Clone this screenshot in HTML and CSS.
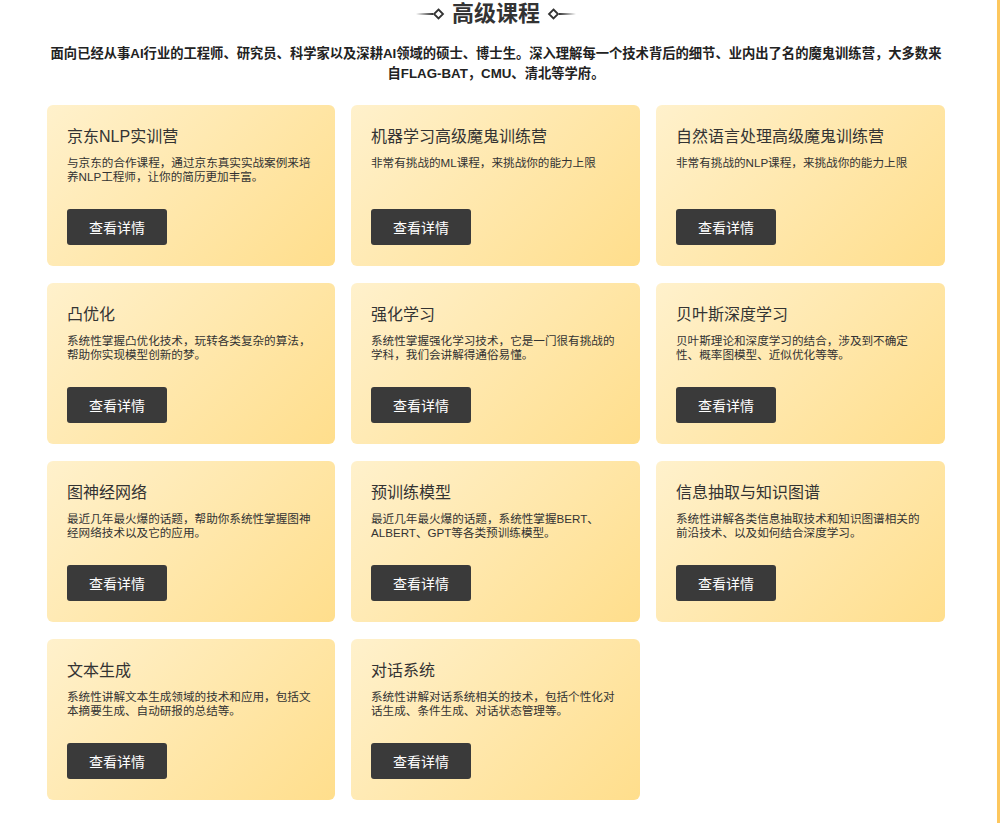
FILE: index.html
```html
<!DOCTYPE html>
<html lang="zh-CN">
<head>
  <meta charset="UTF-8" />
  <meta name="viewport" content="width=device-width, initial-scale=1" />
  <title>高级课程</title>
  <link rel="stylesheet" href="styles.css">
</head>
<body>
  <div class="page">
    <section class="courses">
      <h2 class="section-title">
        <svg class="deco" width="30" height="12" viewBox="0 0 30 12">
          <defs>
            <linearGradient id="fadeL" x1="0" x2="1" y1="0" y2="0">
              <stop offset="0" stop-color="#333" stop-opacity="0" />
              <stop offset="1" stop-color="#333" />
            </linearGradient>
          </defs>
          <rect x="0" y="5" width="17" height="2" fill="url(#fadeL)" />
          <path d="M22.5 1.5 L27 6 L22.5 10.5 L18 6 Z" fill="none" stroke="#333" stroke-width="1.8" />
        </svg>
        <span>高级课程</span>
        <svg class="deco" width="30" height="12" viewBox="0 0 30 12">
          <defs>
            <linearGradient id="fadeR" x1="0" x2="1" y1="0" y2="0">
              <stop offset="0" stop-color="#333" />
              <stop offset="1" stop-color="#333" stop-opacity="0" />
            </linearGradient>
          </defs>
          <path d="M7.5 1.5 L12 6 L7.5 10.5 L3 6 Z" fill="none" stroke="#333" stroke-width="1.8" />
          <rect x="13" y="5" width="17" height="2" fill="url(#fadeR)" />
        </svg>
      </h2>
      <p class="intro">面向已经从事AI行业的工程师、研究员、科学家以及深耕AI领域的硕士、博士生。深入理解每一个技术背后的细节、业内出了名的魔鬼训练营，大多数来自FLAG-BAT，CMU、清北等学府。</p>

      <div class="grid">
        <div class="card">
          <h3>京东NLP实训营</h3>
          <p>与京东的合作课程，通过京东真实实战案例来培养NLP工程师，让你的简历更加丰富。</p>
          <a class="btn" href="#">查看详情</a>
        </div>
        <div class="card">
          <h3>机器学习高级魔鬼训练营</h3>
          <p>非常有挑战的ML课程，来挑战你的能力上限</p>
          <a class="btn" href="#">查看详情</a>
        </div>
        <div class="card">
          <h3>自然语言处理高级魔鬼训练营</h3>
          <p>非常有挑战的NLP课程，来挑战你的能力上限</p>
          <a class="btn" href="#">查看详情</a>
        </div>
        <div class="card">
          <h3>凸优化</h3>
          <p>系统性掌握凸优化技术，玩转各类复杂的算法，帮助你实现模型创新的梦。</p>
          <a class="btn" href="#">查看详情</a>
        </div>
        <div class="card">
          <h3>强化学习</h3>
          <p>系统性掌握强化学习技术，它是一门很有挑战的学科，我们会讲解得通俗易懂。</p>
          <a class="btn" href="#">查看详情</a>
        </div>
        <div class="card">
          <h3>贝叶斯深度学习</h3>
          <p>贝叶斯理论和深度学习的结合，涉及到不确定性、概率图模型、近似优化等等。</p>
          <a class="btn" href="#">查看详情</a>
        </div>
        <div class="card">
          <h3>图神经网络</h3>
          <p>最近几年最火爆的话题，帮助你系统性掌握图神经网络技术以及它的应用。</p>
          <a class="btn" href="#">查看详情</a>
        </div>
        <div class="card">
          <h3>预训练模型</h3>
          <p>最近几年最火爆的话题，系统性掌握BERT、ALBERT、GPT等各类预训练模型。</p>
          <a class="btn" href="#">查看详情</a>
        </div>
        <div class="card">
          <h3>信息抽取与知识图谱</h3>
          <p>系统性讲解各类信息抽取技术和知识图谱相关的前沿技术、以及如何结合深度学习。</p>
          <a class="btn" href="#">查看详情</a>
        </div>
        <div class="card">
          <h3>文本生成</h3>
          <p>系统性讲解文本生成领域的技术和应用，包括文本摘要生成、自动研报的总结等。</p>
          <a class="btn" href="#">查看详情</a>
        </div>
        <div class="card">
          <h3>对话系统</h3>
          <p>系统性讲解对话系统相关的技术，包括个性化对话生成、条件生成、对话状态管理等。</p>
          <a class="btn" href="#">查看详情</a>
        </div>
      </div>
    </section>
  </div>
</body>
</html>
```

FILE: styles.css
```css
body {
  margin: 0;
  padding: 0;
  font-family: "Liberation Sans", "Noto Sans CJK SC", sans-serif;
  color: #333;
  background: #fff;
}
.page {
  width: 997px;
  min-height: 823px;
  border-right: 3px solid #fdc75e;
}
.courses {
  width: 898px;
  margin-left: 47px;
}
.section-title {
  margin: 0;
  padding-top: 1px;
  display: flex;
  justify-content: center;
  align-items: center;
  gap: 6px;
  font-size: 22px;
  line-height: 26px;
  font-weight: 700;
  color: #333;
}
.section-title .deco {
  display: block;
}
.intro {
  margin: 17px 0 0;
  text-align: center;
  font-size: 13.3px;
  line-height: 20px;
  font-weight: 700;
  color: #222;
}
.grid {
  display: grid;
  grid-template-columns: 288px 289px 289px;
  column-gap: 16px;
  row-gap: 17px;
  margin-top: 21px;
}
.card {
  height: 161px;
  box-sizing: border-box;
  padding: 22px 20px 0;
  border-radius: 6px;
  background: linear-gradient(135deg, #fff1cc 0%, #ffde8c 100%);
}
.card h3 {
  margin: 0;
  font-size: 16px;
  line-height: 20px;
  font-weight: 400;
  color: #333;
}
.card p {
  margin: 9px 0 0;
  height: 53px;
  font-size: 11.6px;
  line-height: 14px;
  color: #333;
}
.btn {
  display: flex;
  justify-content: center;
  align-items: center;
  width: 100px;
  height: 36px;
  border-radius: 3px;
  background: #3a3a3a;
  color: #fff;
  font-size: 14px;
  text-decoration: none;
}
```
